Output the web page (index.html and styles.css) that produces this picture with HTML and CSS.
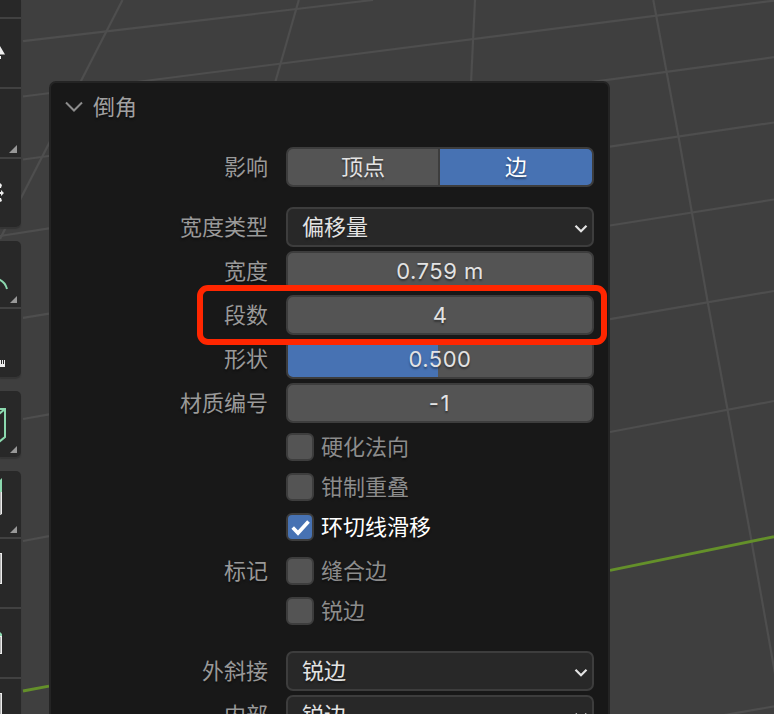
FILE: index.html
```html
<!DOCTYPE html>
<html lang="zh-CN">
<head>
<meta charset="utf-8">
<title>倒角</title>
<link rel="stylesheet" href="styles.css">
</head>
<body>
<main class="viewport">
  <svg class="grid" viewBox="0 0 774 714" aria-hidden="true">
    <g class="grid-lines">
      <path d="M23 41.2L373 0"/>
      <path d="M23 96.5L774 .6"/>
      <path d="M23 159.5L774 57.2"/>
      <path d="M0 236L49 228.3M610 146.6L774 122.5"/>
      <path d="M23 317.8L49 313.6M610 225.5L774 199.5"/>
      <path d="M23 419L49 414.4M610 319.2L774 291"/>
      <path d="M23 541L49 536.2M610 432L774 401"/>
      <path d="M610 735L774 706.4"/>
      <path d="M122.5 0L0 239"/>
      <path d="M298.8 0L275 83"/>
      <path d="M475 0L471 83"/>
      <path d="M653.3 0L678.5 136.5L707.7 302L727.6 410L751.5 541L774 668L782 714"/>
    </g>
    <path class="axis" d="M23 691L49 686.2M610 570.3L774 536.7"/>
  </svg>

  <nav class="toolbar">
    <div class="group group-first">
      <div class="tool tool-cut"></div>
      <div class="tool"><svg viewBox="0 0 21 68"><path class="white" d="M0 27L5 35.5H0zM0 37h1v3H0z"/></svg></div>
      <div class="tool"><svg viewBox="0 0 21 68"><path class="corner" d="M17 56v8H9z"/></svg></div>
      <div class="tool"><svg viewBox="0 0 21 68"><path class="white" d="M0 24l2 2-1 3H0zM1 31l3 3-3 3v-2H0v-2h1zM0 39h1l1 3-2 1z"/></svg></div>
    </div>
    <div class="group">
      <div class="tool tool-short"><svg viewBox="0 0 21 66"><path class="green-line" d="M-1 38.5Q5 41 7 48"/><path class="corner" d="M17 55v7h-7z"/></svg></div>
      <div class="tool"><svg viewBox="0 0 21 68"><path class="white" d="M0 51h1v4h1v-4h1v4h1v-4h1v7H0z"/></svg></div>
    </div>
    <div class="group">
      <div class="tool tool-short"><svg viewBox="0 0 21 66"><path class="green-line" d="M-1 18H5v28L-1 51M-1 23l6-5"/><path class="corner" d="M17 55v7h-7z"/></svg></div>
    </div>
    <div class="group group-last">
      <div class="tool tool-short"><svg viewBox="0 0 21 66"><path class="green" d="M0 9l2-2v14H0z"/><path class="face" d="M0 21h1v22H0z"/><path class="white" d="M1 21h1v22l-2 1v-1h1z"/><path class="corner" d="M17 55v7h-7z"/></svg></div>
      <div class="tool"><svg viewBox="0 0 21 68"><path class="face" d="M0 15h1v29H0z"/><path class="white" d="M0 14h2v31H0v-1h1V15H0z"/></svg></div>
      <div class="tool"><svg viewBox="0 0 21 68"><path class="green" d="M0 23l2 2v2H0z"/><path class="face" d="M0 27h1v17H0z"/><path class="white" d="M0 27h2v18H0v-1h1V28H0z"/></svg></div>
      <div class="tool"><svg viewBox="0 0 21 68"><path class="face" d="M0 15h1v29H0z"/><path class="white" d="M0 14h2v31H0v-1h1V15H0z"/></svg></div>
    </div>
  </nav>

  <section class="panel">
    <header class="panel-head">
      <svg class="disclosure" viewBox="0 0 20 12"><path d="M2 1.5L10 9.5L18 1.5"/></svg>
      <h1>倒角</h1>
    </header>

    <div class="row row-spaced">
      <span class="label">影响</span>
      <div class="field segmented"><span class="segment">顶点</span><span class="segment segment-on">边</span></div>
    </div>

    <div class="fields">
      <div class="row"><span class="label">宽度类型</span>
        <div class="field select">偏移量<svg class="arrow" viewBox="0 0 14 10"><path d="M1.5 1.8L7 7.3L12.5 1.8"/></svg></div></div>
      <div class="row"><span class="label">宽度</span><div class="field number">0.759 m</div></div>
      <div class="row"><span class="label">段数</span><div class="field number">4</div><div class="highlight"></div></div>
      <div class="row"><span class="label">形状</span><div class="field number slider">0.500</div></div>
      <div class="row"><span class="label">材质编号</span><div class="field number signed">-1</div></div>
    </div>

    <div class="checks">
      <div class="check-row"><span class="label"></span><span class="box"></span><span>硬化法向</span></div>
      <div class="check-row"><span class="label"></span><span class="box"></span><span>钳制重叠</span></div>
      <div class="check-row checked"><span class="label"></span><span class="box"><svg viewBox="0 0 24 24"><path d="M4.7 12.5L10 18L20.5 6.5"/></svg></span><span>环切线滑移</span></div>
    </div>
    <div class="checks checks-mark">
      <div class="check-row"><span class="label">标记</span><span class="box"></span><span>缝合边</span></div>
      <div class="check-row"><span class="label"></span><span class="box"></span><span>锐边</span></div>
    </div>

    <div class="fields fields-miter">
      <div class="row"><span class="label">外斜接</span>
        <div class="field select">锐边<svg class="arrow" viewBox="0 0 14 10"><path d="M1.5 1.8L7 7.3L12.5 1.8"/></svg></div></div>
      <div class="row"><span class="label">内部</span>
        <div class="field select">锐边<svg class="arrow" viewBox="0 0 14 10"><path d="M1.5 1.8L7 7.3L12.5 1.8"/></svg></div></div>
    </div>
  </section>
</main>
</body>
</html>
```
FILE: styles.css
```css
* { box-sizing: border-box; }

body {
  margin: 0;
  overflow: hidden;
  background: #3f3f3f;
  font: 22px/32px Inter, "Noto Sans CJK SC", sans-serif;
  color: #999;
}

.viewport {
  position: relative;
  display: flex;
  align-items: flex-start;
  gap: 28px;
  width: 774px;
  height: 714px;
  overflow: hidden;
}

.grid {
  position: absolute;
  inset: 0;
  width: 774px;
  height: 714px;
  fill: none;
}
.grid-lines { stroke: #4e4e4e; stroke-width: 2.2; }
.axis { stroke: #64902a; stroke-width: 2.8; }

/* Toolbar */
.toolbar {
  position: relative;
  display: flex;
  flex-direction: column;
  gap: 14px;
  width: 21px;
}
.group {
  display: flex;
  flex-direction: column;
  gap: 2px;
  overflow: hidden;
  border-radius: 0 5px 5px 0;
  background: #414141;
  box-shadow: 0 2px 1px #353535;
}
.group-first { border-top-right-radius: 0; }
.group-last { border-bottom-right-radius: 0; }
.tool { height: 68px; background: #282828; }
.tool-cut { height: 17px; }
.tool-short { height: 66px; }
.tool svg { display: block; width: 21px; height: 100%; }
.white { fill: #ededed; }
.face { fill: #b4b4b4; }
.green { fill: #8bd8ae; }
.corner { fill: #989898; }
.green-line { fill: none; stroke: #8bd8ae; stroke-width: 2; }

/* Operator panel */
.panel {
  position: relative;
  width: 561px;
  height: 660px;
  margin-top: 81px;
  padding: 8px 14px 0 0;
  border: 2px solid #242424;
  border-radius: 7px;
  background: #181818;
  text-shadow: 0 2px 2px #0006;
}
.panel-head {
  display: flex;
  align-items: center;
  gap: 9px;
  height: 32px;
  padding-left: 13px;
}
.panel-head h1 { margin: 0; font: inherit; color: #a0a0a0; }
.disclosure {
  width: 20px;
  height: 12px;
  margin-top: -1px;
  fill: none;
  stroke: #8c8c8c;
  stroke-width: 2;
}

.row { position: relative; display: flex; gap: 18px; height: 40px; }
.row-spaced { margin: 24px 0 20px; }
.fields { display: flex; flex-direction: column; gap: 4px; }
.label {
  flex: none;
  width: 217px;
  text-align: right;
  line-height: 40px;
}

.field {
  flex: 1;
  height: 40px;
  border: 2px solid #3d3d3d;
  border-radius: 7px;
  color: #e3e3e3;
  line-height: 36px;
}
.segmented {
  display: grid;
  grid-template-columns: 150px 1fr;
  gap: 2px;
  overflow: hidden;
  background: #3d3d3d;
}
.segment { background: #545454; text-align: center; }
.segment-on { background: #4772b3; color: #fff; }
.select {
  display: flex;
  align-items: center;
  justify-content: space-between;
  padding: 0 4px 0 14px;
  background: #282828;
}
.arrow {
  width: 14px;
  height: 10px;
  margin-top: 3px;
  fill: none;
  stroke: #e3e3e3;
  stroke-width: 2.2;
}
.number {
  background: #545454;
  text-align: center;
  letter-spacing: .5px;
}
.signed { letter-spacing: 1.8px; }
.slider { background: linear-gradient(90deg, #4772b3 150px, #545454 150px); }

.highlight {
  position: absolute;
  top: -10.5px;
  left: 146px;
  width: 409.5px;
  height: 60.5px;
  border: 6px solid #ff2600;
  border-radius: 11px;
  z-index: 1;
}

.checks {
  display: flex;
  flex-direction: column;
  gap: 12px;
  margin-top: 10px;
}
.checks-mark { margin-top: 16px; }
.check-row {
  display: flex;
  align-items: center;
  height: 28px;
  color: #8c8c8c;
}
.check-row .label { margin-right: 18px; color: #999; }
.box {
  width: 28px;
  height: 28px;
  margin-right: 7px;
  border: 2px solid #3d3d3d;
  border-radius: 6px;
  background: #545454;
}
.box svg {
  display: block;
  width: 24px;
  height: 24px;
  fill: none;
  stroke: #fff;
  stroke-width: 3.6;
}
.checked { color: #fff; }
.checked .box { background: #4772b3; }
.fields-miter { margin-top: 26px; }
```
